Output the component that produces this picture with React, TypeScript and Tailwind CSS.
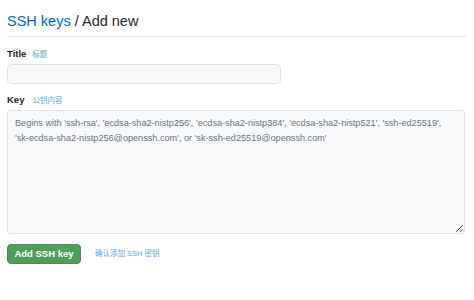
export default function App() {
  return (
    <div className="w-[474px] h-[300px] bg-white px-[7px] font-['Liberation_Sans',Arial,sans-serif] text-[#24292e]">
      {/* Header */}
      <div className="pt-[11px] pb-[5px] border-b border-[#e1e4e8] w-[459px]">
        <h1 className="text-[14.5px] leading-[20px] font-normal">
          <a className="text-[#0366d6]">SSH keys</a> / Add new
        </h1>
      </div>

      {/* Title field */}
      <div className="mt-[10px]">
        <div className="flex items-center gap-[6px] h-[14px]">
          <span className="text-[9.5px] font-bold">Title</span>
          <span className="text-[7.5px] text-[#58a6e6] font-['Noto_Sans_CJK_SC',sans-serif]">标题</span>
        </div>
        <input
          type="text"
          className="mt-[3px] block w-[274px] h-[20px] rounded-[4px] border border-[#dfe2e5] bg-[#f6f8fa] outline-none"
        />
      </div>

      {/* Key field */}
      <div className="mt-[9px]">
        <div className="flex items-center gap-[8px] h-[14px]">
          <span className="text-[9.5px] font-bold">Key</span>
          <span className="text-[7.5px] text-[#58a6e6] font-['Noto_Sans_CJK_SC',sans-serif]">公钥内容</span>
        </div>
        <textarea
          className="mt-[3px] block w-[458px] h-[124px] rounded-[4px] border border-[#dfe2e5] bg-[#f6f8fa] pl-[7px] pr-[4px] pt-[5px] text-[9.15px] leading-[15px] text-[#586069] placeholder:text-[#6a737d] outline-none"
          placeholder={
            "Begins with 'ssh-rsa', 'ecdsa-sha2-nistp256', 'ecdsa-sha2-nistp384', 'ecdsa-sha2-nistp521', 'ssh-ed25519',\n'sk-ecdsa-sha2-nistp256@openssh.com', or 'sk-ssh-ed25519@openssh.com'"
          }
        />
      </div>

      {/* Submit */}
      <div className="mt-[10px] flex items-center gap-[14px]">
        <button className="w-[74px] h-[20px] rounded-[4px] bg-[#4c9e5a] border border-[#459152] text-white text-[9.5px] font-bold">
          Add SSH key
        </button>
        <span className="text-[7.5px] text-[#58a6e6] font-['Liberation_Sans','Noto_Sans_CJK_SC',sans-serif]">确认添加 SSH 密钥</span>
      </div>
    </div>
  );
}
